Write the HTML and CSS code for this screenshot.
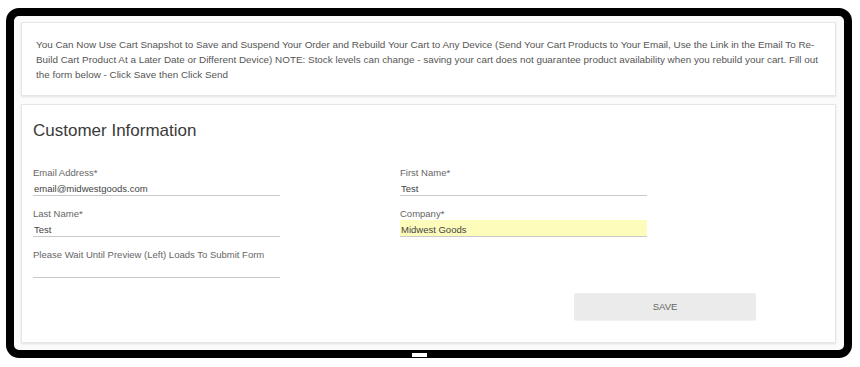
FILE: index.html
```html
<!DOCTYPE html>
<html>
<head>
<meta charset="utf-8">
<link rel="stylesheet" href="styles.css">
</head>
<body>
<div class="frame">
  <div class="card notice">
    You Can Now Use Cart Snapshot to Save and Suspend Your Order and Rebuild Your Cart to Any Device (Send Your Cart Products to Your Email, Use the Link in the Email To Re-Build Cart Product At a Later Date or Different Device) NOTE: Stock levels can change - saving your cart does not guarantee product availability when you rebuild your cart. Fill out the form below - Click Save then Click Send
  </div>
  <div class="card form-card">
    <h2 class="title">Customer Information</h2>
    <div class="grid">
      <div class="field">
        <div class="label">Email Address*</div>
        <div class="input">email@midwestgoods.com</div>
      </div>
      <div class="field">
        <div class="label">First Name*</div>
        <div class="input">Test</div>
      </div>
      <div class="field">
        <div class="label">Last Name*</div>
        <div class="input">Test</div>
      </div>
      <div class="field">
        <div class="label">Company*</div>
        <div class="input autofill">Midwest Goods</div>
      </div>
      <div class="field">
        <div class="label">Please Wait Until Preview (Left) Loads To Submit Form</div>
        <div class="input"></div>
      </div>
    </div>
    <div class="actions">
      <button class="save">SAVE</button>
    </div>
  </div>
  <span class="notch"></span>
</div>
</body>
</html>
```
FILE: styles.css
```css
html, body {
  margin: 0;
  padding: 0;
  background: #ffffff;
}
body {
  font-family: "Liberation Sans", Arial, sans-serif;
  width: 860px;
  height: 367px;
  overflow: hidden;
}
.frame {
  position: relative;
  box-sizing: border-box;
  width: 846px;
  height: 350px;
  margin: 8px 0 0 6px;
  border: 8px solid #000;
  border-radius: 13px;
  background: #fbfbfb;
  padding: 6px 8px 0 7px;
}
.card {
  background: #fff;
  border: 1px solid #e6e6e6;
  box-shadow: 0 1px 2px rgba(0,0,0,0.10);
  box-sizing: border-box;
}
.notice {
  height: 74px;
  padding: 14px 16px 0 14px;
  font-size: 9.9px;
  line-height: 15px;
  color: #555;
}
.form-card {
  margin-top: 8px;
  height: 239px;
  padding: 16px 0 0 11px;
}
.title {
  margin: 0;
  font-weight: normal;
  font-size: 17px;
  line-height: 20px;
  color: #3a3a3a;
}
.grid {
  margin-top: 25px;
  display: grid;
  grid-template-columns: 247px 247px;
  column-gap: 120px;
}
.field {
  margin-bottom: 11.5px;
}
.label {
  font-size: 9.5px;
  line-height: 13px;
  color: #666;
}
.input {
  height: 14px;
  padding-top: 1.5px;
  border-bottom: 1px solid #c9c9c9;
  font-size: 9.5px;
  line-height: 15px;
  color: #444;
  padding-left: 1px;
}
.autofill {
  background: #fdfcba;
}
.actions {
  display: flex;
  margin-top: 4px;
  padding-left: 541px;
}
.save {
  width: 182px;
  height: 27px;
  border: none;
  border-radius: 2px;
  background: #ebebeb;
  color: #666;
  font-family: "Liberation Sans", Arial, sans-serif;
  font-size: 9.5px;
  padding: 0;
  box-shadow: 0 1px 1px rgba(0,0,0,0.06);
}
.notch {
  position: absolute;
  left: 398px;
  bottom: -7px;
  width: 15px;
  height: 4px;
  background: #fff;
}
```
